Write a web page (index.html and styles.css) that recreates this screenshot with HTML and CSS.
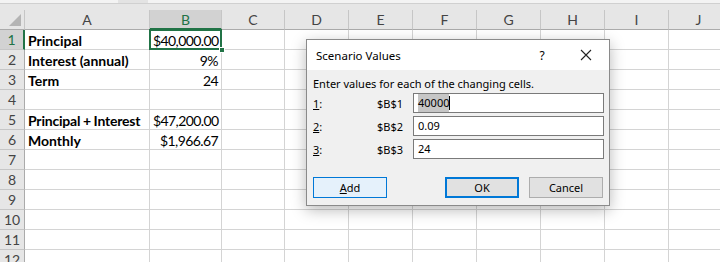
FILE: index.html
```html
<!DOCTYPE html>
<html>
<head>
<meta charset="utf-8">
<link rel="stylesheet" href="styles.css">
</head>
<body>
<div class="app">
  <div class="topstrip"><div class="ts-a"></div><div class="ts-b"></div><div class="ts-c"></div></div>
  <div class="headgap"></div>
  <div class="sheet">
    <div class="corner"><span class="tri"></span></div>
    <div class="ch">A</div>
    <div class="ch sel">B</div>
    <div class="ch">C</div>
    <div class="ch">D</div>
    <div class="ch">E</div>
    <div class="ch">F</div>
    <div class="ch">G</div>
    <div class="ch">H</div>
    <div class="ch">I</div>
    <div class="ch">J</div>

    <div class="rh rsel">1</div>
    <div class="c b">Principal</div>
    <div class="c r active">$40,000.00<span class="handle"></span></div>
    <div class="c"></div><div class="c"></div><div class="c"></div><div class="c"></div><div class="c"></div><div class="c"></div><div class="c"></div><div class="c"></div>

    <div class="rh">2</div>
    <div class="c b">Interest (annual)</div>
    <div class="c r">9%</div>
    <div class="c"></div><div class="c"></div><div class="c"></div><div class="c"></div><div class="c"></div><div class="c"></div><div class="c"></div><div class="c"></div>

    <div class="rh">3</div>
    <div class="c b">Term</div>
    <div class="c r">24</div>
    <div class="c"></div><div class="c"></div><div class="c"></div><div class="c"></div><div class="c"></div><div class="c"></div><div class="c"></div><div class="c"></div>

    <div class="rh">4</div>
    <div class="c"></div><div class="c"></div>
    <div class="c"></div><div class="c"></div><div class="c"></div><div class="c"></div><div class="c"></div><div class="c"></div><div class="c"></div><div class="c"></div>

    <div class="rh">5</div>
    <div class="c b tight">Principal + Interest</div>
    <div class="c r">$47,200.00</div>
    <div class="c"></div><div class="c"></div><div class="c"></div><div class="c"></div><div class="c"></div><div class="c"></div><div class="c"></div><div class="c"></div>

    <div class="rh">6</div>
    <div class="c b">Monthly</div>
    <div class="c r">$1,966.67</div>
    <div class="c"></div><div class="c"></div><div class="c"></div><div class="c"></div><div class="c"></div><div class="c"></div><div class="c"></div><div class="c"></div>

    <div class="rh">7</div>
    <div class="c"></div><div class="c"></div><div class="c"></div><div class="c"></div><div class="c"></div><div class="c"></div><div class="c"></div><div class="c"></div><div class="c"></div><div class="c"></div>
    <div class="rh">8</div>
    <div class="c"></div><div class="c"></div><div class="c"></div><div class="c"></div><div class="c"></div><div class="c"></div><div class="c"></div><div class="c"></div><div class="c"></div><div class="c"></div>
    <div class="rh">9</div>
    <div class="c"></div><div class="c"></div><div class="c"></div><div class="c"></div><div class="c"></div><div class="c"></div><div class="c"></div><div class="c"></div><div class="c"></div><div class="c"></div>
    <div class="rh">10</div>
    <div class="c"></div><div class="c"></div><div class="c"></div><div class="c"></div><div class="c"></div><div class="c"></div><div class="c"></div><div class="c"></div><div class="c"></div><div class="c"></div>
    <div class="rh">11</div>
    <div class="c"></div><div class="c"></div><div class="c"></div><div class="c"></div><div class="c"></div><div class="c"></div><div class="c"></div><div class="c"></div><div class="c"></div><div class="c"></div>
    <div class="rh">12</div>
    <div class="c"></div><div class="c"></div><div class="c"></div><div class="c"></div><div class="c"></div><div class="c"></div><div class="c"></div><div class="c"></div><div class="c"></div><div class="c"></div>
  </div>

  <div class="dialog">
    <div class="titlebar">
      <span class="title">Scenario Values</span>
      <span class="help">?</span>
      <span class="close"><svg width="12" height="12" viewBox="0 0 12 12"><path d="M1 1 L11 11 M11 1 L1 11" stroke="#222" stroke-width="1.1" fill="none"/></svg></span>
    </div>
    <div class="dbody">
      <div class="prompt">Enter values for each of the changing cells.</div>
      <div class="frow"><span class="num"><u>1</u>:</span><span class="ref">$B$1</span><div class="inp"><span class="hl">40000</span><span class="caret"></span></div></div>
      <div class="frow"><span class="num"><u>2</u>:</span><span class="ref">$B$2</span><div class="inp">0.09</div></div>
      <div class="frow"><span class="num"><u>3</u>:</span><span class="ref">$B$3</span><div class="inp">24</div></div>
      <div class="btns">
        <div class="btn add"><u>A</u>dd</div>
        <div class="spacer"></div>
        <div class="btn ok">OK</div>
        <div class="btn">Cancel</div>
      </div>
    </div>
  </div>
</div>
</body>
</html>
```

FILE: styles.css
```css
* { box-sizing: border-box; }
html, body { margin: 0; padding: 0; }
body {
  width: 720px;
  height: 262px;
  overflow: hidden;
  background: #fff;
  font-family: Lato, "Liberation Sans", sans-serif;
}
.app { position: relative; width: 720px; height: 262px; overflow: hidden; }

.topstrip { height: 4px; display: flex; border-bottom: 1px solid #d0d0d0; }
.ts-a { width: 118px; background: #f3f3f3; }
.ts-b { width: 30px; background: #e3e3e3; }
.ts-c { flex: 1; background: #f3f3f3; }
.headgap { height: 6px; background: #e6e6e6; }

.sheet {
  display: grid;
  grid-template-columns: 25px 125px 72px 63px 64px 64px 64px 64px 64px 64px 60px;
  grid-auto-rows: 20px;
  font-size: 14px;
  color: #000;
}
.corner {
  background: #e6e6e6;
  border-right: 1px solid #c6c6c6;
  border-bottom: 1px solid #ababab;
  display: flex;
  align-items: flex-end;
  justify-content: flex-end;
  padding: 0 3px 3px 0;
}
.tri {
  width: 0; height: 0;
  border-left: 12px solid transparent;
  border-bottom: 12px solid #b4b4b4;
}
.ch {
  background: #e6e6e6;
  border-right: 1px solid #c6c6c6;
  border-bottom: 1px solid #ababab;
  text-align: center;
  font-size: 14px;
  line-height: 19px;
  color: #444;
}
.ch.sel {
  background: #d2d2d2;
  color: #217346;
  border-bottom: 2px solid #217346;
}
.rh {
  background: #e6e6e6;
  border-right: 1px solid #ababab;
  border-bottom: 1px solid #c6c6c6;
  text-align: center;
  font-size: 14px;
  line-height: 20px;
  color: #444;
}
.rh.rsel {
  background: #d2d2d2;
  color: #217346;
  border-right: 2px solid #217346;
}
.c {
  border-right: 1px solid #d4d4d4;
  border-bottom: 1px solid #d4d4d4;
  padding: 0 2px 0 3px;
  line-height: 21px;
  white-space: nowrap;
  overflow: visible;
}
.c.b { font-weight: bold; }
.c.tight { word-spacing: -0.5px; letter-spacing: -0.2px; }
.c.r { text-align: right; letter-spacing: -0.6px; padding-right: 3px; }
.c.active { position: relative; }
.c.active::after {
  content: "";
  position: absolute;
  left: -1px; top: -1px; right: -1px; bottom: -1px;
  border: 2px solid #217346;
}
.handle {
  position: absolute;
  right: -4px;
  bottom: -4px;
  width: 6px;
  height: 6px;
  background: #217346;
  border: 1px solid #fff;
  z-index: 2;
}

.dialog {
  position: absolute;
  left: 306px;
  top: 39px;
  width: 304px;
  height: 167px;
  border: 1px solid #8a8a8a;
  background: #f0f0f0;
  box-shadow: 0 4px 14px rgba(0,0,0,0.28);
  font-family: "Noto Sans", "Open Sans", sans-serif;
  font-size: 11px;
  color: #000;
  display: flex;
  flex-direction: column;
}
.titlebar {
  height: 30px;
  background: #fff;
  display: flex;
  align-items: center;
  padding-left: 9px;
  font-size: 11.5px;
}
.title { flex: 1; }
.help { width: 24px; text-align: center; margin-right: 8px; font-size: 12px; }
.close { width: 47px; display: flex; justify-content: center; align-items: center; }
.dbody {
  flex: 1;
  padding: 5px 5px 0 6px;
  display: flex;
  flex-direction: column;
}
.prompt { height: 18px; line-height: 18px; }
.frow {
  display: flex;
  align-items: center;
  height: 20px;
  margin-bottom: 3px;
}
.num { width: 60px; }
.ref { width: 30px; text-align: right; }
.inp {
  width: 191px;
  height: 20px;
  margin-left: 10px;
  border: 1px solid #7a7a7a;
  background: #fff;
  padding: 0 4px;
  line-height: 18px;
  display: flex;
  align-items: center;
}
.hl { background: #c6c6c6; }
.caret { width: 1px; height: 14px; background: #000; }
.btns {
  display: flex;
  margin-top: 15px;
  gap: 10px;
}
.spacer { width: 38px; }
.btn {
  width: 74px;
  height: 21px;
  border: 1px solid #adadad;
  background: #e1e1e1;
  text-align: center;
  line-height: 19px;
}
.btn.add { background: #e5f1fb; border-color: #0078d7; }
.btn.ok { border: 2px solid #0078d7; line-height: 17px; }
```
